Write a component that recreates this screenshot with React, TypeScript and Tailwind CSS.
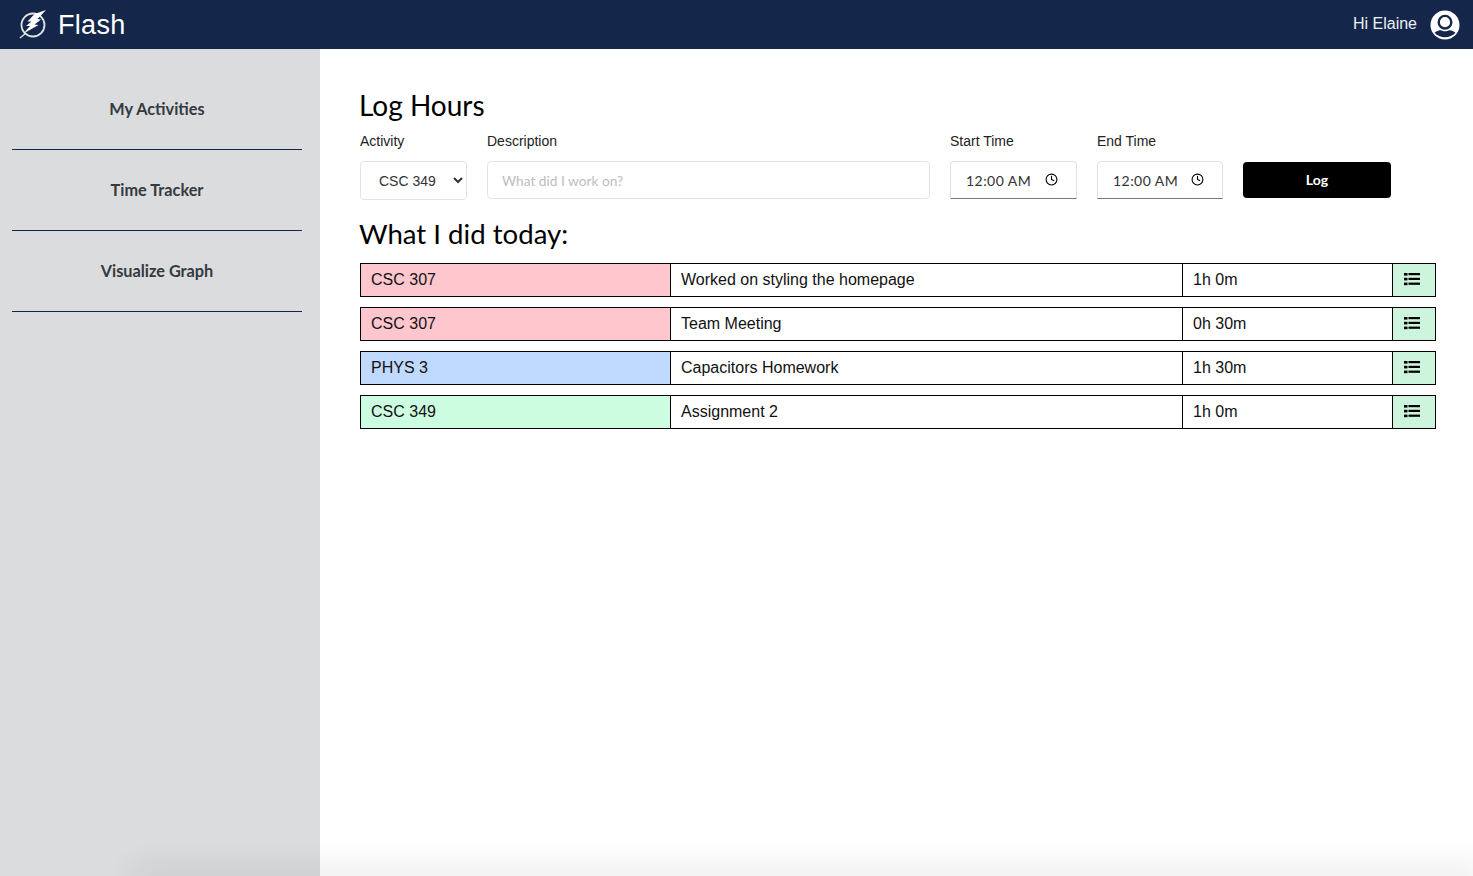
import { FiClock } from 'react-icons/fi'

const navItems = ['My Activities', 'Time Tracker', 'Visualize Graph']

const entries = [
  { activity: 'CSC 307', description: 'Worked on styling the homepage', time: '1h 0m', color: 'bg-[#ffc6cd]' },
  { activity: 'CSC 307', description: 'Team Meeting', time: '0h 30m', color: 'bg-[#ffc6cd]' },
  { activity: 'PHYS 3', description: 'Capacitors Homework', time: '1h 30m', color: 'bg-[#c0d9fe]' },
  { activity: 'CSC 349', description: 'Assignment 2', time: '1h 0m', color: 'bg-[#ccfde0]' },
]

const Logo = () => (
  <svg width="30" height="30" viewBox="0 0 30 30" fill="none">
    <circle cx="15" cy="15" r="11.5" stroke="#dfe2e8" strokeWidth="1.8" />
    <path d="M2 28 L8 23" stroke="#dfe2e8" strokeWidth="1.4" />
    <path
      d="M28 0 L16.5 4 L9.5 11.5 L13.5 11.5 L8 16 L12 16 L5.5 23.5 L20.5 15 L16.5 14.5 L23 9.5 L19.5 9 Z"
      fill="#ffffff"
    />
  </svg>
)

const UserIcon = () => (
  <svg width="30" height="30" viewBox="0 0 30 30">
    <circle cx="15" cy="15" r="14.5" fill="#ffffff" />
    <circle cx="15" cy="12.2" r="6.3" fill="none" stroke="#14264a" strokeWidth="2.4" />
    <path
      d="M4.5 22.8 C7 20.8 9.5 20.2 11 20.2 C13 21.6 17 21.6 19 20.2 C20.5 20.2 23 20.8 25.5 22.8 C22.8 25.8 19 27.2 15 27.2 C11 27.2 7.2 25.8 4.5 22.8 Z"
      fill="#14264a"
    />
  </svg>
)

const ListIcon = () => (
  <svg width="16" height="14" viewBox="0 0 16 14" fill="#000000">
    <rect x="0" y="1" width="3.5" height="2.6" />
    <rect x="4.5" y="1" width="11.5" height="2.2" />
    <rect x="0" y="5.8" width="3.5" height="2.6" />
    <rect x="4.5" y="5.8" width="11.5" height="2.2" />
    <rect x="0" y="10.6" width="3.5" height="2.6" />
    <rect x="4.5" y="10.6" width="11.5" height="2.2" />
  </svg>
)

const TimeField = ({ label, width }: { label: string; width: string }) => (
  <div className={`${width} flex flex-col`}>
    <label className="font-['Liberation_Sans',sans-serif] text-sm leading-4 text-[#222] mb-3">{label}</label>
    <div className="h-[38px] flex items-center justify-between pl-[15px] pr-[18px] bg-white border border-[#e3e3e3] border-b-[#777] rounded-t font-['Lato',sans-serif] text-[14px] tracking-[0.45px] text-[#333]">
      <span>12:00 AM</span>
      <FiClock className="w-[13px] h-[13px] text-black -mt-0.5" />
    </div>
  </div>
)

export default function App() {
  return (
    <div className="relative h-[876px] overflow-hidden bg-white flex flex-col font-['Liberation_Sans',sans-serif]">
      <header className="h-[49px] bg-[#14264a] flex items-center justify-between pl-[18px] pr-[13px] text-white">
        <div className="flex items-center gap-2.5">
          <Logo />
          <span className="text-[27px] leading-none tracking-[0.3px] mt-0.5">Flash</span>
        </div>
        <div className="flex items-center gap-[13px]">
          <span className="text-base text-[#eef0f4] -mt-0.5">Hi Elaine</span>
          <UserIcon />
        </div>
      </header>

      <div className="flex flex-1">
        <aside className="w-[320px] bg-[#dbdcde] pt-5 pl-3 pr-[18px]">
          {navItems.map((item) => (
            <div
              key={item}
              className="h-[81px] flex items-center justify-center border-b border-[#14264a] font-['Lato',sans-serif] font-bold text-[16.3px] text-[#343a40]"
            >
              {item}
            </div>
          ))}
        </aside>

        <main className="flex-1 pl-10 pr-[37px] pt-[39px]">
          <h1 className="font-['Lato',sans-serif] text-[28px] leading-[34px] text-black mb-[11px] -ml-px">Log Hours</h1>

          <form className="flex items-start gap-5">
            <div className="w-[107px] flex flex-col">
              <label className="text-sm leading-4 text-[#222] mb-3">Activity</label>
              <select className="h-[39px] pl-[14px] pr-2 bg-white border border-[#e3e3e3] rounded text-sm text-[#333]">
                <option>CSC 349</option>
              </select>
            </div>
            <div className="w-[443px] flex flex-col">
              <label className="text-sm leading-4 text-[#222] mb-3">Description</label>
              <input
                placeholder="What did I work on?"
                className="h-[38px] px-[14px] bg-white border border-[#e3e3e3] rounded font-['Lato',sans-serif] text-[13.7px] placeholder:text-[#bdbdbd]"
              />
            </div>
            <TimeField label="Start Time" width="w-[127px]" />
            <TimeField label="End Time" width="w-[126px]" />
            <button
              type="button"
              className="w-[148px] h-9 mt-[29px] bg-black text-white rounded font-['Lato',sans-serif] font-bold text-sm"
            >
              Log
            </button>
          </form>

          <h2 className="font-['Lato',sans-serif] text-[27.6px] leading-[34px] text-black mt-[17px] mb-[12px] -ml-px">What I did today:</h2>

          <div className="flex flex-col gap-2.5">
            {entries.map((entry, index) => (
              <div key={index} className="h-[34px] flex border border-black text-base text-[#111]">
                <div className={`${entry.color} w-[310px] pl-2.5 flex items-center border-r border-black`}>{entry.activity}</div>
                <div className="w-[512px] pl-2.5 flex items-center border-r border-black">{entry.description}</div>
                <div className="w-[210px] pl-2.5 flex items-center border-r border-black">{entry.time}</div>
                <div className="flex-1 bg-[#cdf5dd] pl-[11px] flex items-center">
                  <div className="-mt-0.5">
                    <ListIcon />
                  </div>
                </div>
              </div>
            ))}
          </div>
        </main>
      </div>

      {/* soft shadow along the bottom edge */}
      <div className="absolute -bottom-1 left-[145px] right-0 h-1 shadow-[0_0_30px_12px_rgba(0,0,0,0.07)]" />
    </div>
  )
}
